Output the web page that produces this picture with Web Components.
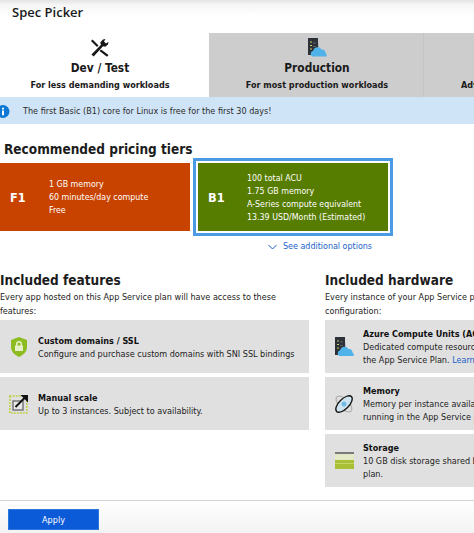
<!DOCTYPE html>
<html lang="en"><head><meta charset="utf-8"><title>Spec Picker</title>
<style>
html,body{margin:0;padding:0;height:533px;overflow:hidden;background:#fff}
body{font:9px/13px "DejaVu Sans Condensed","DejaVu Sans",sans-serif;font-stretch:condensed;color:#222;display:flex;flex-direction:column;width:474px}
svg{display:block}
</style></head><body>
<template id="t-header"><style>
:host{display:block;height:33px;box-sizing:border-box;padding:4px 0 0 12px;background:linear-gradient(#e4e4e4 0,#f6f6f6 5px,#fff 16px);font:600 13px/16px "Open Sans",sans-serif;color:#1a1a1a}
</style><slot></slot></template>
<template id="t-tabs"><style>:host{display:flex;height:64px;overflow:hidden}</style><slot></slot></template>
<template id="t-tab"><style>
:host{display:flex;flex:none;flex-direction:column;align-items:center;box-sizing:border-box;background:#cdcdcd;border-right:1px solid #c4c4c4;padding-top:4px;color:#1a1a1a}
:host([active]){background:#fff;border-right:0;padding-right:9px}
.i{height:22px;display:flex;align-items:center;justify-content:center}
.t{font-size:11.8px;line-height:16px;font-weight:700;margin-top:1px}
.s{font-size:9px;line-height:14px;font-weight:700;margin-top:2px;white-space:nowrap}
</style><div class="i"><slot name="icon"></slot></div><div class="t"><slot name="title"></slot></div><div class="s"><slot name="sub"></slot></div></template>
<template id="t-info"><style>
:host{display:flex;align-items:center;gap:12px;height:27px;box-sizing:border-box;padding-top:1px;background:#cfe4f6;color:#2b2b2b;font-size:9px}
</style><slot name="icon"></slot><slot></slot></template>
<template id="t-title"><style>
:host{display:block;padding:16px 0 0 4px;font-size:13.5px;line-height:18px;font-weight:700;color:#1c1c1c;height:39px;box-sizing:border-box}
</style><slot></slot></template>
<template id="t-tier"><style>
:host{display:flex;align-items:center;box-sizing:border-box;width:190px;height:68px;color:#fff;background:var(--c);font-size:8.8px;line-height:13px;flex:none}
.n{width:49px;padding-left:10px;box-sizing:border-box;font-size:12.6px;font-weight:700}
:host([selected]){box-shadow:0 0 0 2px #fff,0 0 0 5px #4a9ae4}
:host([selected]) .d{padding-top:2px}
</style><div class="n"><slot name="name"></slot></div><div class="d"><slot></slot></div></template>
<template id="t-more"><style>
:host{display:flex;align-items:center;gap:6px;height:13px;margin:9px 0 0 268px;font-size:8.9px;color:#1a5fc8}
</style><slot></slot></template>
<template id="t-section"><style>
:host{display:block;flex:none}
h2{margin:0;font-size:13.5px;line-height:18px;font-weight:700;color:#1c1c1c}
p{margin:1px 0 2px;font-size:9px;line-height:14px;color:#222;white-space:nowrap}
.l{display:flex;flex-direction:column;gap:4px}
</style><h2><slot name="h"></slot></h2><p><slot name="p"></slot></p><div class="l"><slot></slot></div></template>
<template id="t-feature"><style>
:host{display:flex;height:53px;box-sizing:border-box;background:#e0e0e0;overflow:hidden;font-size:9px;line-height:13px;color:#222}
.i{flex:none;width:38px;display:flex;align-items:center;justify-content:center;box-sizing:border-box}
.c{display:flex;flex-direction:column;justify-content:center;white-space:nowrap;padding-top:2px;box-sizing:border-box}
:host([tall]) .c{padding-top:1px}
.t{font-weight:700;color:#111}
::slotted(a){color:#1a5fc8;text-decoration:none}
</style><div class="i"><slot name="icon"></slot></div><div class="c"><div class="t"><slot name="title"></slot></div><div><slot></slot></div></div></template>
<template id="t-footer"><style>
:host{display:block;flex:none;height:33px;margin-top:auto;box-sizing:border-box;border-top:1px solid #d4d4d4;background:linear-gradient(#fff,#f3f3f3);padding:8px 0 0 8px}
button{display:block;width:91px;height:21px;padding:0;border:1px solid #2a78dc;background:#0b5bd8;color:#fff;font:9px "DejaVu Sans Condensed","DejaVu Sans",sans-serif}
</style><button><slot></slot></button></template>

<spec-header>Spec Picker</spec-header>
<spec-tabs>
<spec-tab active style="width:209px">
<svg slot="icon" width="20" height="20" viewBox="0 0 20 20"><path d="M1.500 16.500 11 6.800 10.200 4.500 13 1.500 15.500 1 14 3.500 16 5.500 18.500 3.800 18 6.500 15.200 8.800 13 8.300 3.600 18.600Z" fill="#161616"/><path d="M2.500 1.500 8.500 7.500 7 9 1 3Z" fill="#161616"/><path d="M11 11.500 18.500 17 17 18.800 9.500 13Z" fill="#161616"/></svg>
<span slot="title">Dev / Test</span><span slot="sub">For less demanding workloads</span></spec-tab>
<spec-tab style="width:215px;padding-left:2px">
<svg slot="icon" width="20" height="20" viewBox="0 0 20 20"><path d="M1 0H11V3L11.500 17H1Z" fill="#2c3138"/><path d="M3 4h2M3 7.500h2M3 11h2" stroke="#c9cf6a" stroke-width="1"/><path d="M6 5h3M6 8.500h3" stroke="#777" stroke-width=".7"/><path d="M5.500 18.500a3 3 0 0 1 .7-5.700 4.500 4.500 0 0 1 8.300-1.300 3.500 3.500 0 0 1 4 3.500 3 3 0 0 1 1 3.500Z" fill="#4fb3ea"/></svg>
<span slot="title">Production</span><span slot="sub">For most production workloads</span></spec-tab>
<spec-tab style="width:60px;align-items:flex-start;padding-left:37px;border:0">
<span slot="icon" style="display:block;width:20px;height:20px"></span><span slot="title">&nbsp;</span><span slot="sub">Advanced</span></spec-tab>
</spec-tabs>
<info-bar><svg slot="icon" width="11" height="13" viewBox="0 0 11 13"><circle cx="3" cy="6.500" r="6.500" fill="#0e78d5"/><path d="M2 2.800h2v1.800H2zM2 5.600h2v4.600H2z" fill="#fff"/></svg><span>The first Basic (B1) core for Linux is free for the first 30 days!</span></info-bar>
<tier-title>Recommended pricing tiers</tier-title>
<div style="display:flex;gap:8px;height:68px;flex:none">
<tier-card style="--c:#c84300"><span slot="name">F1</span>1 GB memory<br>60 minutes/day compute<br>Free</tier-card>
<tier-card selected style="--c:#567c00"><span slot="name">B1</span>100 total ACU<br>1.75 GB memory<br>A-Series compute equivalent<br>13.39 USD/Month (Estimated)</tier-card>
</div>
<see-more><svg width="9" height="6" viewBox="0 0 9 6"><path d="M.5 1 4.500 5 8.500 1" fill="none" stroke="#1a5fc8"/></svg>See additional options</see-more>
<div style="display:flex;gap:16px;margin-top:18px;width:640px;flex:none">
<spec-section style="width:309px"><span slot="h">Included features</span><span slot="p">Every app hosted on this App Service plan will have access to these<br>features:</span>
<spec-feature><svg slot="icon" width="16" height="20" viewBox="0 0 16 20"><path d="M8 0 16 3V10C16 15 12 18 8 20 4 18 0 15 0 10V3Z" fill="#8cbc1f"/><path d="M5 8.500V7a3 3 0 0 1 6 0V8.500H12V14H4V8.500ZM6.500 8.500h3V7a1.500 1.500 0 0 0-3 0Z" fill="#e6f0c8" fill-rule="evenodd"/></svg><span slot="title">Custom domains / SSL</span>Configure and purchase custom domains with SNI SSL bindings</spec-feature>
<spec-feature><svg slot="icon" width="20" height="20" viewBox="0 0 20 20"><rect x=".8" y="2" width="17" height="17" fill="none" stroke="#c3d04a" stroke-width="1.500" stroke-dasharray="2 1"/><rect x="4" y="7" width="10" height="9" fill="#e8e8e8" stroke="#777" stroke-width="1.500"/><path d="M6.500 13 16 3.500" stroke="#111" stroke-width="2"/><path d="M11.500 1H19V8.500Z" fill="#111"/></svg><span slot="title">Manual scale</span>Up to 3 instances. Subject to availability.</spec-feature>
</spec-section>
<spec-section style="width:315px"><span slot="h">Included hardware</span><span slot="p">Every instance of your App Service plan will include the following hardware<br>configuration:</span>
<spec-feature tall><svg slot="icon" width="20" height="20" viewBox="0 0 20 20"><path d="M1 0H11V3L11.500 18H1Z" fill="#2c3138"/><path d="M3 4h2M3 7.500h2M3 11h2" stroke="#c9cf6a"/><path d="M6 5h3M6 8.500h3" stroke="#777" stroke-width=".7"/><path d="M5.500 19a3 3 0 0 1 .7-5.700 4.500 4.500 0 0 1 8.300-1.300 3.500 3.500 0 0 1 4 3.500 3 3 0 0 1 1 3.500Z" fill="#4fb3ea"/></svg><span slot="title">Azure Compute Units (ACU)</span>Dedicated compute resources used to run<br>the App Service Plan. <a href="#">Learn more</a></spec-feature>
<spec-feature tall><svg slot="icon" width="20" height="20" viewBox="0 0 20 20"><ellipse cx="10" cy="10" rx="10" ry="5" transform="rotate(45 10 10)" fill="none" stroke="#b0b0b0" stroke-width="1.200"/><ellipse cx="10" cy="10" rx="10.500" ry="5" transform="rotate(-45 10 10)" fill="#cfe4f0" stroke="#111" stroke-width="1.300"/><circle cx="10" cy="10" r="2.500" fill="#6fbbe6"/></svg><span slot="title">Memory</span>Memory per instance available to your apps<br>running in the App Service plan.</spec-feature>
<spec-feature tall><svg slot="icon" width="19" height="17" viewBox="0 0 19 17"><rect width="19" height="17" fill="#a9c036"/><rect width="19" height="2" fill="#7a7a7a"/><rect y="2" width="19" height="6" fill="#e3e8c6"/><rect y="11" width="19" height="1" fill="#c6d66c"/></svg><span slot="title">Storage</span>10 GB disk storage shared by all apps in the<br>plan.</spec-feature>
</spec-section>
</div>
<spec-footer>Apply</spec-footer>
<script>
const reg=(n,t)=>customElements.define(n,class extends HTMLElement{constructor(){super();this.attachShadow({mode:'open'}).appendChild(document.getElementById(t).content.cloneNode(true))}});
reg('spec-header','t-header');reg('spec-tabs','t-tabs');reg('spec-tab','t-tab');reg('info-bar','t-info');reg('tier-title','t-title');reg('tier-card','t-tier');reg('see-more','t-more');reg('spec-section','t-section');reg('spec-feature','t-feature');reg('spec-footer','t-footer');
</script>
</body></html>
